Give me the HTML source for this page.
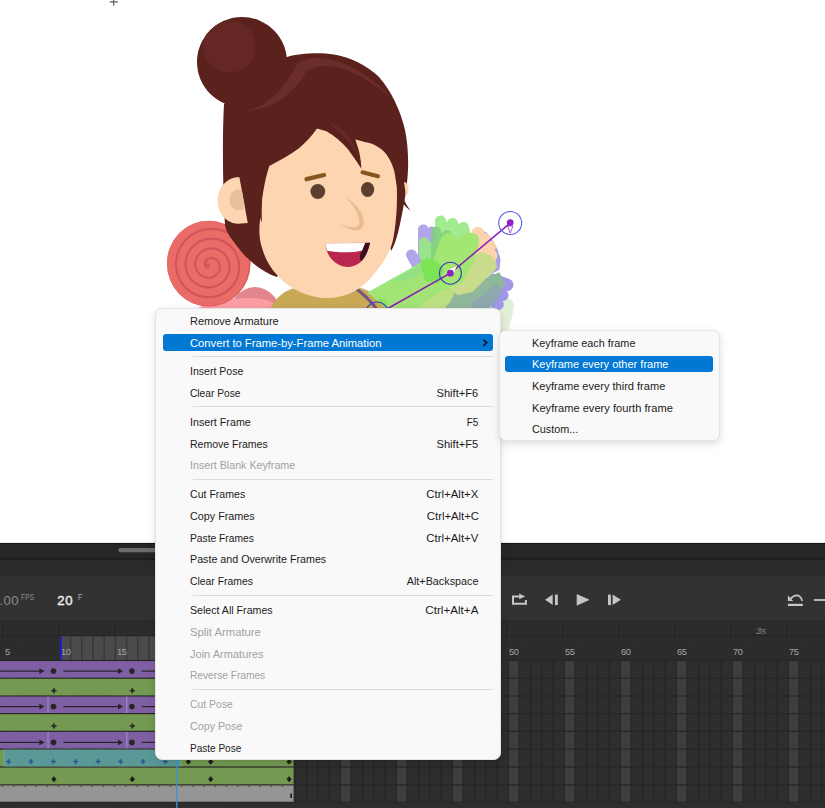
<!DOCTYPE html>
<html>
<head>
<meta charset="utf-8">
<title>Animate</title>
<style>
html,body{margin:0;padding:0;background:#fff;}
body{width:825px;height:808px;position:relative;overflow:hidden;font-family:"Liberation Sans",sans-serif;}
#art{position:absolute;left:0;top:0;width:825px;height:808px;}
.menu{position:absolute;background:#f9f9f9;border:1px solid #e4e4e4;border-radius:7px;box-shadow:0 3px 9px rgba(0,0,0,0.13),0 0 1px rgba(0,0,0,0.08);box-sizing:border-box;}
.mi{position:absolute;font-size:11.5px;color:#1b1b1b;white-space:nowrap;line-height:14px;transform-origin:0 50%;}
.dis{color:#a2a2a2;}
.sep{position:absolute;height:1px;background:#dcdcdc;}
.hl{position:absolute;background:#0078d4;border-radius:3px;}
.wh{color:#fff;}
</style>
</head>
<body>
<svg id="art" width="825" height="808" viewBox="0 0 825 808">
<!--STAGE-->
<rect x="0" y="0" width="825" height="543" fill="#ffffff"/>
<path d="M113.7 0v5.8M109.8 1.9h8" stroke="#5a5a5a" stroke-width="1.1" fill="none"/>
<!--CHARACTER-->
<g id="char">
<!-- pink rolls -->
<ellipse cx="255" cy="322" rx="28" ry="35" fill="#e1868b"/>
<path d="M190 312 C205 303,230 298,250 298 C266 298,276 302,284 312z" fill="#fb9da2"/>
<ellipse cx="208.8" cy="263.6" rx="41.8" ry="42.9" fill="#da5a5d"/>
<ellipse cx="208" cy="263.6" rx="41" ry="42.6" fill="#ea6c67"/>
<path d="M206.5 267.6 L206.1 267.1 L205.6 266.6 L205.3 265.9 L205.0 265.2 L204.9 264.4 L204.9 263.6 L205.1 262.7 L205.3 261.9 L205.8 261.1 L206.3 260.3 L207.1 259.6 L207.9 259.0 L208.9 258.5 L209.9 258.2 L211.0 258.1 L212.2 258.1 L213.4 258.3 L214.6 258.7 L215.7 259.2 L216.7 260.0 L217.7 261.0 L218.5 262.1 L219.1 263.3 L219.6 264.7 L219.8 266.2 L219.8 267.7 L219.6 269.2 L219.2 270.7 L218.5 272.2 L217.5 273.5 L216.4 274.7 L215.0 275.8 L213.5 276.7 L211.8 277.3 L210.0 277.7 L208.2 277.8 L206.3 277.6 L204.5 277.1 L202.6 276.3 L201.0 275.3 L199.4 274.0 L198.1 272.4 L196.9 270.6 L196.1 268.7 L195.5 266.6 L195.3 264.4 L195.4 262.2 L195.9 259.9 L196.7 257.8 L197.8 255.7 L199.2 253.8 L201.0 252.2 L203.0 250.7 L205.2 249.6 L207.6 248.9 L210.1 248.5 L212.7 248.4 L215.3 248.8 L217.8 249.6 L220.2 250.7 L222.5 252.2 L224.5 254.1 L226.2 256.3 L227.7 258.7 L228.7 261.4 L229.3 264.2 L229.5 267.1 L229.3 270.1 L228.6 273.0 L227.5 275.8 L225.9 278.5 L224.0 280.9 L221.6 283.0 L219.0 284.7 L216.1 286.1 L213.0 287.0 L209.7 287.4 L206.4 287.4 L203.1 286.8 L199.9 285.7 L196.8 284.2 L194.0 282.2 L191.5 279.8 L189.4 277.0 L187.7 273.8 L186.5 270.5 L185.8 266.9 L185.6 263.2 L186.0 259.6 L186.9 256.0 L188.4 252.5 L190.4 249.3 L192.9 246.4 L195.8 243.8 L199.1 241.7 L202.7 240.2 L206.6 239.1 L210.6 238.7 L214.6 238.8 L218.6 239.6 L222.5 241.0 L226.1 242.9 L229.5 245.4 L232.5 248.4 L235.0 251.9 L236.9 255.7 L238.3 259.8 L239.1 264.1 L239.2 268.4 L238.7 272.8 L237.5 277.1 L235.6 281.2 L233.2 285.0 L230.1 288.4 L226.6 291.4 L222.7 293.8 L218.3 295.6 L213.8 296.7 L209.1 297.2 L204.3 296.9 L199.6 295.9 L195.1 294.2 L190.8 291.9 L186.9 288.9 L183.5 285.3 L180.6 281.2 L178.4 276.7 L176.8 271.9 L176.0 266.9 L175.9 261.8 L176.7 256.7 L178.1 251.7 L180.4 247.0 L183.3 242.6 L186.9 238.7 L191.0 235.3 L195.6 232.6 L200.6 230.6 L205.9 229.4 L211.4 228.9 L216.9 229.3 L222.3 230.6 L227.5 232.6 L232.3 235.4 L236.8 238.9 L240.6 243.0 L243.8 247.8 L246.3 252.9" stroke="#d4535a" stroke-width="2.1" fill="none" stroke-linecap="round"/>
<circle cx="207.3" cy="265.6" r="2.6" fill="#d7565b"/>
<!-- shirt -->
<path d="M268 314 C274 297,286 289,298 287.5 L358 287.5 C372 290,384 300,392 314z" fill="#c9a856"/>
<path d="M355.5 288 C362 293,370 300,377.5 310" stroke="#6f5682" stroke-width="2.9" fill="none"/>
<!-- hair back + bun -->
<circle cx="242" cy="62" r="45" fill="#5b211d"/>
<clipPath id="bunclip"><circle cx="242" cy="62" r="45"/></clipPath>
<circle cx="229.5" cy="46.3" r="26.3" fill="#642723" clip-path="url(#bunclip)"/>
<path d="M224 104 C250 80,270 62,287 57 C300 53,320 52.5,334 54.5 C350 57,368 66,379 77 C392 92,401 112,405 130 C408 145,408.5 160,408 170 C407 190,403 210,400 224 C397 238,394 246,391 251 C389 240,388 230,388 222 L330 200 L277 277 C262 272,248 260,240 250 C232 240,226 232,225 225 C223 190,222 140,224 104z" fill="#5b211d"/>
<!-- ear -->
<clipPath id="earclip"><path d="M239.4 177.2 C228 176.5,217.6 187,217.6 200.6 C217.6 214,227 223.6,238 223.8 L247.8 223.1z"/></clipPath>
<path d="M239.4 177.2 C228 176.5,217.6 187,217.6 200.6 C217.6 214,227 223.6,238 223.8 L247.8 223.1z" fill="#fdd5b1"/>
<ellipse cx="238.6" cy="199.8" rx="9.4" ry="10.5" fill="#e9c0a0" clip-path="url(#earclip)"/>
<!-- face -->
<path d="M317 128.4 C312 136,305 143,299 148.2 C290 154.5,280 160.5,269.3 166 C266 176,263 190,261.5 205 C261 212,260.5 218,259.6 224 C259 232,259.5 240,262 248 C265 258,270 268,278 276 C290 290,310 298,327 298 C345 298,362 290,374 274 C384 262,390 252,393 240 C396 225,397.5 205,396.8 187 L394.5 172 C393 166,391 162,388.9 158.2 C386 153,382 149,377.3 146.5 C373 144,369 142.5,365.6 142.2 L350 138 L326 127z" fill="#fdd5b1"/>
<path d="M404 182 C409 182,410 192,406 196z" fill="#fdd5b1"/>
<!-- hair front strands -->
<path d="M317 128.4 L326.4 131.3 Q338 137.8 348.2 149.5 Q355.5 159.6 361.3 168.4 Q361 155 356.2 142.2 L350 124 L320 120z" fill="#5b211d"/>
<path d="M327 121 Q345 128 354 145 Q358 153 359.5 160 Q352 142 338 131z" fill="#682a26"/>
<path d="M258 205 L262 200 C261.6 208,261.6 216,262 222.6 C260.5 219,259 214,258 208z" fill="#5b211d"/>
<path d="M399 186 C402 196,406 205,410.5 210.5 C405 207,400 200,397 192z" fill="#5b211d"/>
<!-- hair highlight -->
<path d="M243 111 C268 108,284 88,296 66 C306 52,350 52,396 102 C352 64,322 60,306 72 C294 92,276 110,243 111z" fill="#6b2d29"/>
<!-- brows -->
<path d="M306.5 179.2 L324 175" stroke="#87561c" stroke-width="4.3" stroke-linecap="round" fill="none"/>
<path d="M362.5 172.3 L378 176.2" stroke="#87561c" stroke-width="4.1" stroke-linecap="round" fill="none"/>
<!-- eyes -->
<ellipse cx="317.8" cy="191.5" rx="7.4" ry="7.4" fill="#5b402f"/>
<ellipse cx="367.6" cy="189.5" rx="6.6" ry="7.4" fill="#5b402f"/>
<!-- nose -->
<path d="M345.2 197.6 C352 200.5,358.5 207,361.8 214 C364.3 219.5,364.6 224.5,362.2 228 C359 232,351 231,340.3 224.3 C350 227.8,356.3 228.3,358.6 225.3 C360.3 222.5,359.3 218,357.3 213.5 C354.3 207,350.3 201.7,345.2 197.6z" fill="#e9bd92"/>
<!-- mouth -->
<path d="M325.2 243.2 L370 242.7 C369.3 246.5,368 250,366.8 252.9 C364.5 258,361.5 262,357.4 264.2 C354 266,351 267,348 267 C344 267,341 266,338.8 264.8 C333 261.5,329.5 257.5,327.7 252.9 C326.5 250,325.6 246.5,325.2 243.2z" fill="#b9264e"/>
<path d="M365.1 242.9 L370 242.7 C369.3 246.5,368 250,366.8 252.9 C365.3 256.5,363.5 259,361.2 261.2 C360 259.5,359.8 257.5,360 255.5 C360.3 253.5,361 252,362.1 250.4z" fill="#3b0d1d"/>
<path d="M325.2 243.2 L365.1 242.9 L362.1 250.4 C359 251.3,356 251.7,353.2 251.9 C349 252.3,344.5 252.4,340.5 252.2 C336 252,331.5 251.6,327.3 250.8 C326.4 248.5,325.7 246,325.2 243.2z" fill="#ffffff"/>
<!-- arm / hands onion skins -->
<g stroke-linejoin="round">
<path d="M500 298 C506 296,514 299,514 305 C513 315,510 325,508 332 L496 332z" fill="#e3f0d8"/>
<!-- back arms (light green/purple mix) -->

<!-- purple hand A -->
<g fill="#b0a6e8">
<rect x="418" y="224.5" width="10.5" height="40" rx="5"/>
<rect x="427" y="226.5" width="9.5" height="36" rx="4.7"/>
<path d="M406.3 256.5 a5.4 5.4 0 0 1 10 -4 l8 12 l-9 8z"/>
</g>
<!-- purple fingers G -->
<g fill="#a197e8">
<rect x="487" y="276" width="27" height="12.5" rx="6.2" transform="rotate(20 500 282)"/>
<rect x="487" y="287" width="22" height="11.5" rx="5.7" transform="rotate(28 498 293)"/>
<rect x="483" y="296" width="22" height="11" rx="5.5" transform="rotate(34 494 301)"/>
</g>
<path d="M481 231 l6 4 l5 7 l4 8 l3 9 l-1 10 l-8 4z" fill="#a89ee6" stroke="#a89ee6" stroke-width="3" stroke-linejoin="round"/>
<!-- peach hand D -->
<g fill="#fdd3ae">
<circle cx="478" cy="233" r="6.3"/><circle cx="484.5" cy="239" r="6"/><circle cx="490" cy="246.5" r="6"/><circle cx="491.5" cy="255.5" r="6"/><circle cx="490" cy="263" r="6"/>
<path d="M472 232 L480 227 L496 255 L494 268 L474 262z"/>
</g>
<!-- gray-green F -->
<path d="M426 312 L440 296 L470 291 L488 278 L499 273.5 L504 284 L494 300 L484 312z" fill="#8fb79a" stroke="#8fb79a" stroke-width="2"/>
<path d="M470 304 L497 284 L503 292 L492 312 L474 312z" fill="#8d9fc0" opacity="0.6"/>
<!-- olive E -->
<path d="M472 261 L476 256 Q481 251 486 255 Q491 255 493 260 Q498 265 494 270 L487 276 L472 291 L458 294 L448 288z" fill="#c9dc8c" stroke="#c9dc8c" stroke-width="2"/>
<!-- light green hands B -->
<g fill="#97ea84" opacity="0.9">
<path d="M435 262 L435 222 a5.6 5.6 0 0 1 11.2 -1.5 l1 2 a5.4 5.4 0 0 1 10.4 -1 l1.2 3.5 a5.3 5.3 0 0 1 10 1.5 l1.5 7 L474 262 L446 284z"/>
<path d="M419 256 L419 243 a5 5 0 0 1 10 -1 L436 240 L470 236 L462 280 L440 288 L426 270z"/>
</g>
<path d="M431 262 L431 232 a5 5 0 0 1 10 -1 l1 4 a5 5 0 0 1 10 0 l1 8 l-4 20z" fill="#7fcd80" opacity="0.8"/>
<!-- main arm -->
<path d="M367.6 292.4 L426 260 L452 292 L440 314 L392 314z" fill="#a1e475"/>
<path d="M408 314 L444 289 L456 290 L450 302 L440 314z" fill="#bce081"/>
<path d="M394 278 L423 261.8 L427 271 L400 282z" fill="#93e085"/><path d="M367.6 292.4 L423 261.6 L423.6 263 L369 294z" fill="#98ea86"/><path d="M377 300.6 Q381.5 296 386 300.5 Q388.5 304 388.5 312 L389.7 312z" fill="#86e45f"/>
<!-- lime hand C -->
<path d="M431 266 L442 238 Q446 232 451 234 Q455 236 456 241 L461 237.5 Q466 233 471 233.5 Q478 234 478.5 240 L477 249 L472.7 260.5 L462 282 L444 289 L434 280z" fill="#a3e672" stroke="#a3e672" stroke-width="1.5"/>
<path d="M421.8 261.7 L427 259.5 L436.4 263.2 L442.2 270.5 L437.8 282 L426.2 279.2 L423.3 269z" fill="#7ce455" stroke="#7ce455" stroke-width="3"/>
</g>
<!-- bones -->
<path d="M386 309.5 L450.4 273.2 L510.2 223" stroke="#8a1cb6" stroke-width="1.5" fill="none"/>
<circle cx="377" cy="313" r="11" stroke="#3d3fc0" stroke-width="1.1" fill="none"/>
<circle cx="450.4" cy="273.2" r="11" stroke="#3d3fc0" stroke-width="1.1" fill="none"/>
<circle cx="510.2" cy="223" r="11.5" stroke="#5a5cf0" stroke-width="1.1" fill="none"/>
<path d="M449 269.5 L456.6 266.4 L453.6 273.6z" fill="#ffffff"/>
<circle cx="450.4" cy="273.2" r="3.4" fill="#9322c4"/>
<path d="M507.5 226 l5.5 0 l-2.8 7z" fill="#ffffff" stroke="#a02cc8" stroke-width="0.8"/>
<circle cx="510.2" cy="222.6" r="3.4" fill="#9322c4"/>
</g>
<!--/CHARACTER-->
<!--TIMELINE-->
<rect x="0" y="543" width="825" height="265" fill="#323232"/>
<rect x="0" y="543" width="825" height="15" fill="#262626"/>
<rect x="0" y="542.9" width="825" height="1" fill="#141414"/>
<rect x="0" y="557.8" width="825" height="2.9" fill="#1e1e1e"/>
<rect x="0" y="560.5" width="825" height="15.5" fill="#2b2b2b"/>
<rect x="118.2" y="548" width="60" height="4.2" rx="2.1" fill="#6b6b6b"/>
<text x="-0.4" y="604.8" font-family="Liberation Sans, sans-serif" font-size="13.2" fill="#8c8c8c" letter-spacing="0.3">.00</text>
<text x="21" y="600.4" font-family="Liberation Sans, sans-serif" font-size="8.6" fill="#8c8c8c" textLength="13.2" lengthAdjust="spacingAndGlyphs">FPS</text>
<text x="57.3" y="604.8" font-family="Liberation Sans, sans-serif" font-size="13.2" fill="#f4f4f4" stroke="#f4f4f4" stroke-width="0.35" letter-spacing="0.6">20</text>
<text x="78" y="600.4" font-family="Liberation Sans, sans-serif" font-size="8.6" fill="#b0b0b0" textLength="4.3" lengthAdjust="spacingAndGlyphs">F</text>
<path d="M519.5 596.6H513V603.8H525.9V600" stroke="#c6c6c6" stroke-width="2" fill="none"/>
<path d="M519.2 593.6V599.3L525.2 596.5z" fill="#c6c6c6"/>
<path d="M552.7 594.6v10.5l-7.6-5.25z" fill="#c6c6c6"/><rect x="555" y="594.6" width="2.8" height="10.5" fill="#c6c6c6"/>
<path d="M577 594.5V605.2L589 599.85z" fill="#c6c6c6" stroke="#c6c6c6" stroke-width="0.6" stroke-linejoin="round"/>
<rect x="608" y="594.6" width="2.9" height="10.5" fill="#c6c6c6"/><path d="M612.6 594.6v10.5l8.3-5.25z" fill="#c6c6c6"/>
<path d="M787.9 595.6v5.5h5.3z" fill="#c6c6c6"/>
<path d="M790.6 598.7Q795.5 593.4 799.6 596.3Q802 598.3 802.2 601" stroke="#c6c6c6" stroke-width="1.7" fill="none"/>
<rect x="787.9" y="603.8" width="15" height="2.2" fill="#c6c6c6"/>
<rect x="813.8" y="599.1" width="12" height="1.8" fill="#c6c6c6"/>
<rect x="0" y="621" width="825" height="14.5" fill="#2c2c2c"/>
<rect x="0" y="620.5" width="825" height="1" fill="#262626"/>
<rect x="0" y="635.3" width="825" height="1" fill="#202020"/>
<rect x="0" y="636" width="825" height="24.5" fill="#2c2c2c"/>
<rect x="59.5" y="636" width="240.5" height="24.5" fill="#393939"/>
<rect x="60.1" y="636.5" width="9.7" height="24" fill="#4b4b4b"/>
<rect x="71.3" y="636.5" width="9.7" height="24" fill="#4b4b4b"/>
<rect x="82.5" y="636.5" width="9.7" height="24" fill="#4b4b4b"/>
<rect x="93.7" y="636.5" width="9.7" height="24" fill="#4b4b4b"/>
<rect x="104.9" y="636.5" width="9.7" height="24" fill="#4b4b4b"/>
<rect x="116.1" y="636.5" width="9.7" height="24" fill="#4b4b4b"/>
<rect x="127.3" y="636.5" width="9.7" height="24" fill="#4b4b4b"/>
<rect x="138.5" y="636.5" width="9.7" height="24" fill="#4b4b4b"/>
<rect x="149.7" y="636.5" width="9.7" height="24" fill="#4b4b4b"/>
<rect x="160.9" y="636.5" width="9.7" height="24" fill="#4b4b4b"/>
<rect x="172.1" y="636.5" width="9.7" height="24" fill="#4b4b4b"/>
<rect x="183.3" y="636.5" width="9.7" height="24" fill="#4b4b4b"/>
<rect x="194.5" y="636.5" width="9.7" height="24" fill="#4b4b4b"/>
<rect x="205.7" y="636.5" width="9.7" height="24" fill="#4b4b4b"/>
<rect x="216.9" y="636.5" width="9.7" height="24" fill="#4b4b4b"/>
<rect x="228.1" y="636.5" width="9.7" height="24" fill="#4b4b4b"/>
<rect x="239.3" y="636.5" width="9.7" height="24" fill="#4b4b4b"/>
<rect x="250.5" y="636.5" width="9.7" height="24" fill="#4b4b4b"/>
<rect x="261.7" y="636.5" width="9.7" height="24" fill="#4b4b4b"/>
<rect x="272.9" y="636.5" width="9.7" height="24" fill="#4b4b4b"/>
<rect x="284.1" y="636.5" width="9.7" height="24" fill="#4b4b4b"/>
<rect x="295.3" y="636.5" width="9.7" height="24" fill="#4b4b4b"/>
<rect x="3.2" y="621.5" width="1" height="14" fill="#212121"/>
<rect x="4.2" y="621.5" width="1" height="14" fill="#333333"/>
<rect x="3.2" y="636.5" width="1" height="7" fill="#222222"/>
<rect x="4.2" y="636.5" width="1" height="7" fill="#353535"/>
<rect x="14.4" y="636.5" width="1" height="7" fill="#222222"/>
<rect x="15.4" y="636.5" width="1" height="7" fill="#353535"/>
<rect x="25.6" y="636.5" width="1" height="7" fill="#222222"/>
<rect x="26.6" y="636.5" width="1" height="7" fill="#353535"/>
<rect x="36.8" y="636.5" width="1" height="7" fill="#222222"/>
<rect x="37.8" y="636.5" width="1" height="7" fill="#353535"/>
<rect x="48.0" y="636.5" width="1" height="7" fill="#222222"/>
<rect x="49.0" y="636.5" width="1" height="7" fill="#353535"/>
<rect x="59.2" y="621.5" width="1" height="14" fill="#212121"/>
<rect x="60.2" y="621.5" width="1" height="14" fill="#333333"/>
<rect x="115.2" y="621.5" width="1" height="14" fill="#212121"/>
<rect x="116.2" y="621.5" width="1" height="14" fill="#333333"/>
<rect x="171.2" y="621.5" width="1" height="14" fill="#212121"/>
<rect x="172.2" y="621.5" width="1" height="14" fill="#333333"/>
<rect x="227.2" y="621.5" width="1" height="14" fill="#212121"/>
<rect x="228.2" y="621.5" width="1" height="14" fill="#333333"/>
<rect x="283.2" y="621.5" width="1" height="14" fill="#212121"/>
<rect x="284.2" y="621.5" width="1" height="14" fill="#333333"/>
<rect x="305.6" y="636.5" width="1" height="7" fill="#222222"/>
<rect x="306.6" y="636.5" width="1" height="7" fill="#353535"/>
<rect x="316.8" y="636.5" width="1" height="7" fill="#222222"/>
<rect x="317.8" y="636.5" width="1" height="7" fill="#353535"/>
<rect x="328.0" y="636.5" width="1" height="7" fill="#222222"/>
<rect x="329.0" y="636.5" width="1" height="7" fill="#353535"/>
<rect x="339.2" y="621.5" width="1" height="14" fill="#212121"/>
<rect x="340.2" y="621.5" width="1" height="14" fill="#333333"/>
<rect x="339.2" y="636.5" width="1" height="7" fill="#222222"/>
<rect x="340.2" y="636.5" width="1" height="7" fill="#353535"/>
<rect x="350.4" y="636.5" width="1" height="7" fill="#222222"/>
<rect x="351.4" y="636.5" width="1" height="7" fill="#353535"/>
<rect x="361.6" y="636.5" width="1" height="7" fill="#222222"/>
<rect x="362.6" y="636.5" width="1" height="7" fill="#353535"/>
<rect x="372.8" y="636.5" width="1" height="7" fill="#222222"/>
<rect x="373.8" y="636.5" width="1" height="7" fill="#353535"/>
<rect x="384.0" y="636.5" width="1" height="7" fill="#222222"/>
<rect x="385.0" y="636.5" width="1" height="7" fill="#353535"/>
<rect x="395.2" y="621.5" width="1" height="14" fill="#212121"/>
<rect x="396.2" y="621.5" width="1" height="14" fill="#333333"/>
<rect x="395.2" y="636.5" width="1" height="7" fill="#222222"/>
<rect x="396.2" y="636.5" width="1" height="7" fill="#353535"/>
<rect x="406.4" y="636.5" width="1" height="7" fill="#222222"/>
<rect x="407.4" y="636.5" width="1" height="7" fill="#353535"/>
<rect x="417.6" y="636.5" width="1" height="7" fill="#222222"/>
<rect x="418.6" y="636.5" width="1" height="7" fill="#353535"/>
<rect x="428.8" y="636.5" width="1" height="7" fill="#222222"/>
<rect x="429.8" y="636.5" width="1" height="7" fill="#353535"/>
<rect x="440.0" y="636.5" width="1" height="7" fill="#222222"/>
<rect x="441.0" y="636.5" width="1" height="7" fill="#353535"/>
<rect x="451.2" y="621.5" width="1" height="14" fill="#212121"/>
<rect x="452.2" y="621.5" width="1" height="14" fill="#333333"/>
<rect x="451.2" y="636.5" width="1" height="7" fill="#222222"/>
<rect x="452.2" y="636.5" width="1" height="7" fill="#353535"/>
<rect x="462.4" y="636.5" width="1" height="7" fill="#222222"/>
<rect x="463.4" y="636.5" width="1" height="7" fill="#353535"/>
<rect x="473.6" y="636.5" width="1" height="7" fill="#222222"/>
<rect x="474.6" y="636.5" width="1" height="7" fill="#353535"/>
<rect x="484.8" y="636.5" width="1" height="7" fill="#222222"/>
<rect x="485.8" y="636.5" width="1" height="7" fill="#353535"/>
<rect x="496.0" y="636.5" width="1" height="7" fill="#222222"/>
<rect x="497.0" y="636.5" width="1" height="7" fill="#353535"/>
<rect x="507.2" y="621.5" width="1" height="14" fill="#212121"/>
<rect x="508.2" y="621.5" width="1" height="14" fill="#333333"/>
<rect x="507.2" y="636.5" width="1" height="7" fill="#222222"/>
<rect x="508.2" y="636.5" width="1" height="7" fill="#353535"/>
<rect x="518.4" y="636.5" width="1" height="7" fill="#222222"/>
<rect x="519.4" y="636.5" width="1" height="7" fill="#353535"/>
<rect x="529.6" y="636.5" width="1" height="7" fill="#222222"/>
<rect x="530.6" y="636.5" width="1" height="7" fill="#353535"/>
<rect x="540.8" y="636.5" width="1" height="7" fill="#222222"/>
<rect x="541.8" y="636.5" width="1" height="7" fill="#353535"/>
<rect x="552.0" y="636.5" width="1" height="7" fill="#222222"/>
<rect x="553.0" y="636.5" width="1" height="7" fill="#353535"/>
<rect x="563.2" y="621.5" width="1" height="14" fill="#212121"/>
<rect x="564.2" y="621.5" width="1" height="14" fill="#333333"/>
<rect x="563.2" y="636.5" width="1" height="7" fill="#222222"/>
<rect x="564.2" y="636.5" width="1" height="7" fill="#353535"/>
<rect x="574.4" y="636.5" width="1" height="7" fill="#222222"/>
<rect x="575.4" y="636.5" width="1" height="7" fill="#353535"/>
<rect x="585.6" y="636.5" width="1" height="7" fill="#222222"/>
<rect x="586.6" y="636.5" width="1" height="7" fill="#353535"/>
<rect x="596.8" y="636.5" width="1" height="7" fill="#222222"/>
<rect x="597.8" y="636.5" width="1" height="7" fill="#353535"/>
<rect x="608.0" y="636.5" width="1" height="7" fill="#222222"/>
<rect x="609.0" y="636.5" width="1" height="7" fill="#353535"/>
<rect x="619.2" y="621.5" width="1" height="14" fill="#212121"/>
<rect x="620.2" y="621.5" width="1" height="14" fill="#333333"/>
<rect x="619.2" y="636.5" width="1" height="7" fill="#222222"/>
<rect x="620.2" y="636.5" width="1" height="7" fill="#353535"/>
<rect x="630.4" y="636.5" width="1" height="7" fill="#222222"/>
<rect x="631.4" y="636.5" width="1" height="7" fill="#353535"/>
<rect x="641.6" y="636.5" width="1" height="7" fill="#222222"/>
<rect x="642.6" y="636.5" width="1" height="7" fill="#353535"/>
<rect x="652.8" y="636.5" width="1" height="7" fill="#222222"/>
<rect x="653.8" y="636.5" width="1" height="7" fill="#353535"/>
<rect x="664.0" y="636.5" width="1" height="7" fill="#222222"/>
<rect x="665.0" y="636.5" width="1" height="7" fill="#353535"/>
<rect x="675.2" y="621.5" width="1" height="14" fill="#212121"/>
<rect x="676.2" y="621.5" width="1" height="14" fill="#333333"/>
<rect x="675.2" y="636.5" width="1" height="7" fill="#222222"/>
<rect x="676.2" y="636.5" width="1" height="7" fill="#353535"/>
<rect x="686.4" y="636.5" width="1" height="7" fill="#222222"/>
<rect x="687.4" y="636.5" width="1" height="7" fill="#353535"/>
<rect x="697.6" y="636.5" width="1" height="7" fill="#222222"/>
<rect x="698.6" y="636.5" width="1" height="7" fill="#353535"/>
<rect x="708.8" y="636.5" width="1" height="7" fill="#222222"/>
<rect x="709.8" y="636.5" width="1" height="7" fill="#353535"/>
<rect x="720.0" y="636.5" width="1" height="7" fill="#222222"/>
<rect x="721.0" y="636.5" width="1" height="7" fill="#353535"/>
<rect x="731.2" y="621.5" width="1" height="14" fill="#212121"/>
<rect x="732.2" y="621.5" width="1" height="14" fill="#333333"/>
<rect x="731.2" y="636.5" width="1" height="7" fill="#222222"/>
<rect x="732.2" y="636.5" width="1" height="7" fill="#353535"/>
<rect x="742.4" y="636.5" width="1" height="7" fill="#222222"/>
<rect x="743.4" y="636.5" width="1" height="7" fill="#353535"/>
<rect x="753.6" y="636.5" width="1" height="7" fill="#222222"/>
<rect x="754.6" y="636.5" width="1" height="7" fill="#353535"/>
<rect x="764.8" y="636.5" width="1" height="7" fill="#222222"/>
<rect x="765.8" y="636.5" width="1" height="7" fill="#353535"/>
<rect x="776.0" y="636.5" width="1" height="7" fill="#222222"/>
<rect x="777.0" y="636.5" width="1" height="7" fill="#353535"/>
<rect x="787.2" y="621.5" width="1" height="14" fill="#212121"/>
<rect x="788.2" y="621.5" width="1" height="14" fill="#333333"/>
<rect x="787.2" y="636.5" width="1" height="7" fill="#222222"/>
<rect x="788.2" y="636.5" width="1" height="7" fill="#353535"/>
<rect x="798.4" y="636.5" width="1" height="7" fill="#222222"/>
<rect x="799.4" y="636.5" width="1" height="7" fill="#353535"/>
<rect x="809.6" y="636.5" width="1" height="7" fill="#222222"/>
<rect x="810.6" y="636.5" width="1" height="7" fill="#353535"/>
<rect x="820.8" y="636.5" width="1" height="7" fill="#222222"/>
<rect x="821.8" y="636.5" width="1" height="7" fill="#353535"/>
<text x="5.1" y="654.7" font-family="Liberation Sans, sans-serif" font-size="9.2" fill="#a4a4a4" letter-spacing="-0.35">5</text>
<text x="61.1" y="654.7" font-family="Liberation Sans, sans-serif" font-size="9.2" fill="#a4a4a4" letter-spacing="-0.35">10</text>
<text x="117.1" y="654.7" font-family="Liberation Sans, sans-serif" font-size="9.2" fill="#a4a4a4" letter-spacing="-0.35">15</text>
<text x="173.1" y="654.7" font-family="Liberation Sans, sans-serif" font-size="9.2" fill="#a4a4a4" letter-spacing="-0.35">20</text>
<text x="229.1" y="654.7" font-family="Liberation Sans, sans-serif" font-size="9.2" fill="#a4a4a4" letter-spacing="-0.35">25</text>
<text x="285.1" y="654.7" font-family="Liberation Sans, sans-serif" font-size="9.2" fill="#a4a4a4" letter-spacing="-0.35">30</text>
<text x="341.1" y="654.7" font-family="Liberation Sans, sans-serif" font-size="9.2" fill="#a4a4a4" letter-spacing="-0.35">35</text>
<text x="397.1" y="654.7" font-family="Liberation Sans, sans-serif" font-size="9.2" fill="#a4a4a4" letter-spacing="-0.35">40</text>
<text x="453.1" y="654.7" font-family="Liberation Sans, sans-serif" font-size="9.2" fill="#a4a4a4" letter-spacing="-0.35">45</text>
<text x="509.1" y="654.7" font-family="Liberation Sans, sans-serif" font-size="9.2" fill="#a4a4a4" letter-spacing="-0.35">50</text>
<text x="565.1" y="654.7" font-family="Liberation Sans, sans-serif" font-size="9.2" fill="#a4a4a4" letter-spacing="-0.35">55</text>
<text x="621.1" y="654.7" font-family="Liberation Sans, sans-serif" font-size="9.2" fill="#a4a4a4" letter-spacing="-0.35">60</text>
<text x="677.1" y="654.7" font-family="Liberation Sans, sans-serif" font-size="9.2" fill="#a4a4a4" letter-spacing="-0.35">65</text>
<text x="733.1" y="654.7" font-family="Liberation Sans, sans-serif" font-size="9.2" fill="#a4a4a4" letter-spacing="-0.35">70</text>
<text x="789.1" y="654.7" font-family="Liberation Sans, sans-serif" font-size="9.2" fill="#a4a4a4" letter-spacing="-0.35">75</text>
<text x="756" y="633.5" font-family="Liberation Sans, sans-serif" font-size="9.5" font-style="italic" fill="#8a8a8a">3s</text>
<rect x="59.9" y="636.5" width="1.6" height="24" fill="#1010f2"/>
<defs><pattern id="grid" x="59.5" y="0" width="56" height="20" patternUnits="userSpaceOnUse"><rect width="56" height="20" fill="#232323"/><rect x="1.3" y="0" width="9.8" height="20" fill="#3e3e3e"/><rect x="12.5" y="0" width="9.8" height="20" fill="#2e2e2e"/><rect x="23.7" y="0" width="9.8" height="20" fill="#2e2e2e"/><rect x="34.9" y="0" width="9.8" height="20" fill="#2e2e2e"/><rect x="46.1" y="0" width="9.8" height="20" fill="#2e2e2e"/></pattern></defs>
<rect x="0" y="660.5" width="825" height="141.4" fill="url(#grid)"/>
<rect x="0" y="659.9" width="825" height="1.2" fill="#262626"/>
<rect x="0" y="677.6" width="825" height="1.2" fill="#262626"/>
<rect x="0" y="695.4" width="825" height="1.2" fill="#262626"/>
<rect x="0" y="713.0" width="825" height="1.2" fill="#262626"/>
<rect x="0" y="730.7" width="825" height="1.2" fill="#262626"/>
<rect x="0" y="748.5" width="825" height="1.2" fill="#262626"/>
<rect x="0" y="766.4" width="825" height="1.2" fill="#262626"/>
<rect x="0" y="784.3" width="825" height="1.2" fill="#262626"/>
<rect x="0" y="801.7" width="825" height="1.2" fill="#262626"/>
<rect x="0" y="802.4" width="825" height="5.6" fill="#2e2e2e"/>
<rect x="0" y="661.1" width="294.2" height="16.5" fill="#7f5fa4"/>
<rect x="0" y="678.8" width="294.2" height="16.6" fill="#749a51"/>
<rect x="0" y="696.6" width="294.2" height="16.4" fill="#7f5fa4"/>
<rect x="0" y="714.2" width="294.2" height="16.5" fill="#749a51"/>
<rect x="0" y="731.9" width="294.2" height="16.6" fill="#7f5fa4"/>
<rect x="0" y="749.7" width="294.2" height="16.7" fill="#749a51"/>
<rect x="3.8" y="749.7" width="176.89999999999998" height="16.7" fill="#5a9998"/>
<rect x="3.8" y="749.7" width="0.8" height="16.7" fill="#6cb0ae"/>
<rect x="180.7" y="749.7" width="0.8" height="16.7" fill="#8cb768"/>
<rect x="0" y="767.6" width="294.2" height="16.7" fill="#749a51"/>
<rect x="0" y="785.5" width="294.2" height="16.2" fill="#959595"/>
<rect x="293.59999999999997" y="660.5" width="1.4" height="141.4" fill="#2a2a2a"/>
<rect x="-5" y="670.5" width="46.6" height="1.2" fill="#262626"/>
<path d="M44.6 671.1l-5.2 -2.8v5.6z" fill="#262626"/>
<rect x="63.3" y="670.5" width="56.900000000000006" height="1.2" fill="#262626"/>
<path d="M123.2 671.1l-5.2 -2.8v5.6z" fill="#262626"/>
<rect x="141.8" y="670.5" width="20.19999999999999" height="1.2" fill="#262626"/>
<path d="M165 671.1l-5.2 -2.8v5.6z" fill="#262626"/>
<circle cx="53.5" cy="671.1" r="2.8" fill="#262626"/>
<circle cx="131.9" cy="671.1" r="2.8" fill="#262626"/>
<rect x="-5" y="706.0" width="46.6" height="1.2" fill="#262626"/>
<path d="M44.6 706.6l-5.2 -2.8v5.6z" fill="#262626"/>
<rect x="63.3" y="706.0" width="56.900000000000006" height="1.2" fill="#262626"/>
<path d="M123.2 706.6l-5.2 -2.8v5.6z" fill="#262626"/>
<rect x="141.8" y="706.0" width="20.19999999999999" height="1.2" fill="#262626"/>
<path d="M165 706.6l-5.2 -2.8v5.6z" fill="#262626"/>
<circle cx="53.5" cy="706.6" r="2.8" fill="#262626"/>
<circle cx="131.9" cy="706.6" r="2.8" fill="#262626"/>
<rect x="47.5" y="696.6" width="1.1" height="16.4" fill="#a48ac6"/>
<rect x="126.3" y="696.6" width="1.1" height="16.4" fill="#a48ac6"/>
<rect x="-5" y="741.8" width="46.6" height="1.2" fill="#262626"/>
<path d="M44.6 742.4l-5.2 -2.8v5.6z" fill="#262626"/>
<rect x="63.3" y="741.8" width="56.900000000000006" height="1.2" fill="#262626"/>
<path d="M123.2 742.4l-5.2 -2.8v5.6z" fill="#262626"/>
<rect x="141.8" y="741.8" width="20.19999999999999" height="1.2" fill="#262626"/>
<path d="M165 742.4l-5.2 -2.8v5.6z" fill="#262626"/>
<circle cx="53.5" cy="742.4" r="2.8" fill="#262626"/>
<circle cx="131.9" cy="742.4" r="2.8" fill="#262626"/>
<rect x="47.5" y="731.9" width="1.1" height="16.6" fill="#a48ac6"/>
<rect x="126.3" y="731.9" width="1.1" height="16.6" fill="#a48ac6"/>
<path d="M53.9 688.1Q53.9 690.7 56.5 690.7Q53.9 690.7 53.9 693.3000000000001Q53.9 690.7 51.3 690.7Q53.9 690.7 53.9 688.1z" fill="#262626" stroke="#262626" stroke-width="0.9"/>
<path d="M132.3 688.1Q132.3 690.7 134.9 690.7Q132.3 690.7 132.3 693.3000000000001Q132.3 690.7 129.70000000000002 690.7Q132.3 690.7 132.3 688.1z" fill="#262626" stroke="#262626" stroke-width="0.9"/>
<path d="M53.9 723.4Q53.9 726.0 56.5 726.0Q53.9 726.0 53.9 728.6Q53.9 726.0 51.3 726.0Q53.9 726.0 53.9 723.4z" fill="#262626" stroke="#262626" stroke-width="0.9"/>
<path d="M132.3 723.4Q132.3 726.0 134.9 726.0Q132.3 726.0 132.3 728.6Q132.3 726.0 129.70000000000002 726.0Q132.3 726.0 132.3 723.4z" fill="#262626" stroke="#262626" stroke-width="0.9"/>
<path d="M53.9 776.4000000000001L56.199999999999996 779.2L53.9 782.0L51.6 779.2z" fill="#1c1c1c" stroke="#1c1c1c" stroke-width="0.5" stroke-linejoin="round"/>
<path d="M132.3 776.4000000000001L134.60000000000002 779.2L132.3 782.0L130.0 779.2z" fill="#1c1c1c" stroke="#1c1c1c" stroke-width="0.5" stroke-linejoin="round"/>
<path d="M210.7 776.4000000000001L213.0 779.2L210.7 782.0L208.39999999999998 779.2z" fill="#1c1c1c" stroke="#1c1c1c" stroke-width="0.5" stroke-linejoin="round"/>
<path d="M289.1 776.4000000000001L291.40000000000003 779.2L289.1 782.0L286.8 779.2z" fill="#1c1c1c" stroke="#1c1c1c" stroke-width="0.5" stroke-linejoin="round"/>
<path d="M8.6 759.1Q8.6 761.6 11.1 761.6Q8.6 761.6 8.6 764.1Q8.6 761.6 6.1 761.6Q8.6 761.6 8.6 759.1z" fill="#2c5a90" stroke="#2c5a90" stroke-width="0.9"/>
<path d="M31.0 759.1Q31.0 761.6 33.5 761.6Q31.0 761.6 31.0 764.1Q31.0 761.6 28.5 761.6Q31.0 761.6 31.0 759.1z" fill="#2c5a90" stroke="#2c5a90" stroke-width="0.9"/>
<path d="M53.4 759.1Q53.4 761.6 55.9 761.6Q53.4 761.6 53.4 764.1Q53.4 761.6 50.9 761.6Q53.4 761.6 53.4 759.1z" fill="#2c5a90" stroke="#2c5a90" stroke-width="0.9"/>
<path d="M75.8 759.1Q75.8 761.6 78.3 761.6Q75.8 761.6 75.8 764.1Q75.8 761.6 73.3 761.6Q75.8 761.6 75.8 759.1z" fill="#2c5a90" stroke="#2c5a90" stroke-width="0.9"/>
<path d="M98.2 759.1Q98.2 761.6 100.7 761.6Q98.2 761.6 98.2 764.1Q98.2 761.6 95.7 761.6Q98.2 761.6 98.2 759.1z" fill="#2c5a90" stroke="#2c5a90" stroke-width="0.9"/>
<path d="M120.6 759.1Q120.6 761.6 123.1 761.6Q120.6 761.6 120.6 764.1Q120.6 761.6 118.1 761.6Q120.6 761.6 120.6 759.1z" fill="#2c5a90" stroke="#2c5a90" stroke-width="0.9"/>
<path d="M143.0 759.1Q143.0 761.6 145.5 761.6Q143.0 761.6 143.0 764.1Q143.0 761.6 140.5 761.6Q143.0 761.6 143.0 759.1z" fill="#2c5a90" stroke="#2c5a90" stroke-width="0.9"/>
<path d="M165.4 759.1Q165.4 761.6 167.9 761.6Q165.4 761.6 165.4 764.1Q165.4 761.6 162.9 761.6Q165.4 761.6 165.4 759.1z" fill="#2c5a90" stroke="#2c5a90" stroke-width="0.9"/>
<path d="M188.3 759.3L190.8 761.8L188.3 764.3L185.8 761.8z" fill="#1c1c1c" stroke="#1c1c1c" stroke-width="0.5" stroke-linejoin="round"/>
<path d="M210.7 759.3L213.2 761.8L210.7 764.3L208.2 761.8z" fill="#1c1c1c" stroke="#1c1c1c" stroke-width="0.5" stroke-linejoin="round"/>
<path d="M289.1 759.3L291.6 761.8L289.1 764.3L286.6 761.8z" fill="#1c1c1c" stroke="#1c1c1c" stroke-width="0.5" stroke-linejoin="round"/>
<rect x="-43.2" y="785.7" width="1.6" height="1.3" fill="#505050"/>
<rect x="-32.0" y="785.7" width="1.6" height="1.3" fill="#505050"/>
<rect x="-20.8" y="785.7" width="1.6" height="1.3" fill="#505050"/>
<rect x="-9.6" y="785.7" width="1.6" height="1.3" fill="#505050"/>
<rect x="1.6" y="785.7" width="1.6" height="1.3" fill="#505050"/>
<rect x="12.8" y="785.7" width="1.6" height="1.3" fill="#505050"/>
<rect x="24.0" y="785.7" width="1.6" height="1.3" fill="#505050"/>
<rect x="35.2" y="785.7" width="1.6" height="1.3" fill="#505050"/>
<rect x="46.4" y="785.7" width="1.6" height="1.3" fill="#505050"/>
<rect x="57.6" y="785.7" width="1.6" height="1.3" fill="#505050"/>
<rect x="68.8" y="785.7" width="1.6" height="1.3" fill="#505050"/>
<rect x="80.0" y="785.7" width="1.6" height="1.3" fill="#505050"/>
<rect x="91.2" y="785.7" width="1.6" height="1.3" fill="#505050"/>
<rect x="102.4" y="785.7" width="1.6" height="1.3" fill="#505050"/>
<rect x="113.6" y="785.7" width="1.6" height="1.3" fill="#505050"/>
<rect x="124.8" y="785.7" width="1.6" height="1.3" fill="#505050"/>
<rect x="136.0" y="785.7" width="1.6" height="1.3" fill="#505050"/>
<rect x="147.2" y="785.7" width="1.6" height="1.3" fill="#505050"/>
<rect x="158.4" y="785.7" width="1.6" height="1.3" fill="#505050"/>
<rect x="169.6" y="785.7" width="1.6" height="1.3" fill="#505050"/>
<rect x="180.8" y="785.7" width="1.6" height="1.3" fill="#505050"/>
<rect x="192.0" y="785.7" width="1.6" height="1.3" fill="#505050"/>
<rect x="203.2" y="785.7" width="1.6" height="1.3" fill="#505050"/>
<rect x="214.4" y="785.7" width="1.6" height="1.3" fill="#505050"/>
<rect x="225.6" y="785.7" width="1.6" height="1.3" fill="#505050"/>
<rect x="236.8" y="785.7" width="1.6" height="1.3" fill="#505050"/>
<rect x="248.0" y="785.7" width="1.6" height="1.3" fill="#505050"/>
<rect x="259.2" y="785.7" width="1.6" height="1.3" fill="#505050"/>
<rect x="270.4" y="785.7" width="1.6" height="1.3" fill="#505050"/>
<rect x="281.6" y="785.7" width="1.6" height="1.3" fill="#505050"/>
<rect x="290.3" y="793.6" width="1.7" height="4.4" fill="#1a1a1a"/>
<rect x="176.2" y="700" width="1.3" height="108" fill="#3d8fd8"/>
<!--/TIMELINE-->
</svg>

<!--MENU-->
<div class="menu" id="m1" style="left:155.3px;top:307.8px;width:345.7px;height:451.9px;">
<div class="hl" style="left:6.4px;top:25.3px;width:330.7px;height:16.5px;"></div>
<div class="mi " style="left:34.1px;top:5.2px;transform:scaleX(0.9570);">Remove Armature</div>
<div class="mi wh" style="left:34.1px;top:26.9px;transform:scaleX(0.9755);">Convert to Frame-by-Frame Animation</div>
<div class="mi " style="left:34.1px;top:55.6px;transform:scaleX(0.9163);">Insert Pose</div>
<div class="mi " style="left:33.7px;top:77.1px;transform:scaleX(0.8859);">Clear Pose</div>
<div class="mi " style="left:279.1px;top:77.1px;transform-origin:100% 50%;transform:scaleX(0.9639);">Shift+F6</div>
<div class="mi " style="left:34.1px;top:106.2px;transform:scaleX(0.9327);">Insert Frame</div>
<div class="mi " style="left:308.9px;top:106.2px;transform-origin:100% 50%;transform:scaleX(0.8717);">F5</div>
<div class="mi " style="left:34.1px;top:127.9px;transform:scaleX(0.9141);">Remove Frames</div>
<div class="mi " style="left:279.1px;top:127.9px;transform-origin:100% 50%;transform:scaleX(0.9639);">Shift+F5</div>
<div class="mi dis" style="left:34.1px;top:149.6px;transform:scaleX(0.9298);">Insert Blank Keyframe</div>
<div class="mi " style="left:33.7px;top:178.6px;transform:scaleX(0.9188);">Cut Frames</div>
<div class="mi " style="left:269.9px;top:178.6px;transform-origin:100% 50%;transform:scaleX(0.9958);">Ctrl+Alt+X</div>
<div class="mi " style="left:33.7px;top:200.2px;transform:scaleX(0.9373);">Copy Frames</div>
<div class="mi " style="left:269.3px;top:200.2px;transform-origin:100% 50%;transform:scaleX(0.9840);">Ctrl+Alt+C</div>
<div class="mi " style="left:34.1px;top:221.9px;transform:scaleX(0.8913);">Paste Frames</div>
<div class="mi " style="left:269.9px;top:221.9px;transform-origin:100% 50%;transform:scaleX(0.9958);">Ctrl+Alt+V</div>
<div class="mi " style="left:34.1px;top:243.6px;transform:scaleX(0.9306);">Paste and Overwrite Frames</div>
<div class="mi " style="left:33.7px;top:265.3px;transform:scaleX(0.9030);">Clear Frames</div>
<div class="mi " style="left:245.9px;top:265.3px;transform-origin:100% 50%;transform:scaleX(0.9373);">Alt+Backspace</div>
<div class="mi " style="left:33.7px;top:294.7px;transform:scaleX(0.9231);">Select All Frames</div>
<div class="mi " style="left:269.9px;top:294.7px;transform-origin:100% 50%;transform:scaleX(1.0129);">Ctrl+Alt+A</div>
<div class="mi dis" style="left:33.7px;top:316.4px;transform:scaleX(0.9815);">Split Armature</div>
<div class="mi dis" style="left:33.3px;top:337.9px;transform:scaleX(0.9595);">Join Armatures</div>
<div class="mi dis" style="left:34.1px;top:359.6px;transform:scaleX(0.8847);">Reverse Frames</div>
<div class="mi dis" style="left:33.7px;top:388.4px;transform:scaleX(0.9067);">Cut Pose</div>
<div class="mi dis" style="left:33.7px;top:410.2px;transform:scaleX(0.9313);">Copy Pose</div>
<div class="mi " style="left:34.1px;top:431.9px;transform:scaleX(0.8720);">Paste Pose</div>
<div class="sep" style="left:37.2px;top:47.3px;width:299.3px;"></div>
<div class="sep" style="left:37.2px;top:97.7px;width:299.3px;"></div>
<div class="sep" style="left:37.2px;top:169.9px;width:299.3px;"></div>
<div class="sep" style="left:37.2px;top:286.1px;width:299.3px;"></div>
<div class="sep" style="left:37.2px;top:380.1px;width:299.3px;"></div>
<svg style="position:absolute;left:325.7px;top:29.19999999999999px;" width="8" height="10" viewBox="0 0 8 10"><path d="M1.3 1.6 L4.8 4.6 L1.3 7.6" stroke="#10131c" stroke-width="1.4" fill="none"/></svg>
</div>
<div class="menu" id="m2" style="left:498.5px;top:330.4px;width:221.1px;height:110.4px;">
<div class="hl" style="left:5.2px;top:24.4px;width:208.5px;height:16.5px;"></div>
<div class="mi " style="left:32.5px;top:4.4px;transform:scaleX(0.9405);">Keyframe each frame</div>
<div class="mi wh" style="left:32.5px;top:26.0px;transform:scaleX(0.9577);">Keyframe every other frame</div>
<div class="mi " style="left:32.5px;top:47.6px;transform:scaleX(0.9612);">Keyframe every third frame</div>
<div class="mi " style="left:32.5px;top:69.3px;transform:scaleX(0.9668);">Keyframe every fourth frame</div>
<div class="mi " style="left:32.5px;top:91.1px;transform:scaleX(0.9407);">Custom...</div>
</div>
<!--/MENU-->
</body>
</html>
